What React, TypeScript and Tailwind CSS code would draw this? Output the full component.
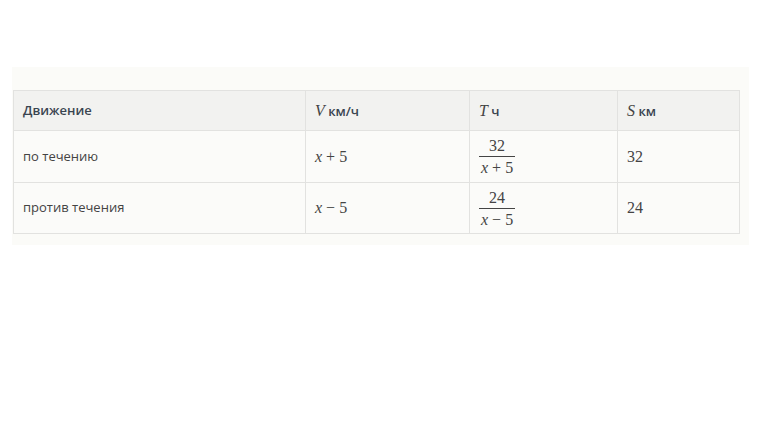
import React from 'react';

const serif = "font-['Liberation_Serif','DejaVu_Serif',serif]";

function M({ children }: { children: React.ReactNode }) {
  return <span className={`${serif} text-[16px] font-normal text-[#444]`}>{children}</span>;
}

function Op({ children }: { children: React.ReactNode }) {
  return <span className="inline-block px-[4px]">{children}</span>;
}

function X() {
  return <i>x</i>;
}

function Frac({ num, den }: { num: React.ReactNode; den: React.ReactNode }) {
  return (
    <span className={`${serif} inline-flex flex-col items-center text-[16px] leading-[21px]`}>
      <span className="px-[2px]">{num}</span>
      <span className="h-px w-full bg-[#444]" />
      <span className="px-[2px]">{den}</span>
    </span>
  );
}

export default function App() {
  const cell = 'border border-[#e2e2e0] px-[9px] align-middle';
  return (
    <div className="min-h-[425px] bg-white pt-[67px] pl-[12px] font-['Open_Sans','Liberation_Sans',sans-serif] text-[#444]">
      <div className="w-[737px] h-[178px] bg-[#fbfbf8] pt-[23px] pl-[1px]">
        <table className="w-[726px] table-fixed border-collapse text-[13px]">
          <colgroup>
            <col className="w-[292px]" />
            <col className="w-[164px]" />
            <col className="w-[148px]" />
            <col className="w-[122px]" />
          </colgroup>
          <thead>
            <tr className="h-[40px] bg-[#f2f2f0] text-left text-[#3a4550]">
              <th className={`${cell} font-semibold`}>Движение</th>
              <th className={`${cell} font-semibold`}>
                <M><i>V</i></M> км/ч
              </th>
              <th className={`${cell} font-semibold`}>
                <M><i>T</i></M> ч
              </th>
              <th className={`${cell} font-semibold`}>
                <M><i>S</i></M> км
              </th>
            </tr>
          </thead>
          <tbody className="bg-[#fbfbf9]">
            <tr className="h-[52px]">
              <td className={cell}>по течению</td>
              <td className={cell}>
                <M><X /><Op>+</Op>5</M>
              </td>
              <td className={cell}>
                <Frac num="32" den={<><X /><Op>+</Op>5</>} />
              </td>
              <td className={cell}>
                <M>32</M>
              </td>
            </tr>
            <tr className="h-[51px]">
              <td className={cell}>против течения</td>
              <td className={cell}>
                <M><X /><Op>−</Op>5</M>
              </td>
              <td className={cell}>
                <Frac num="24" den={<><X /><Op>−</Op>5</>} />
              </td>
              <td className={cell}>
                <M>24</M>
              </td>
            </tr>
          </tbody>
        </table>
      </div>
    </div>
  );
}
